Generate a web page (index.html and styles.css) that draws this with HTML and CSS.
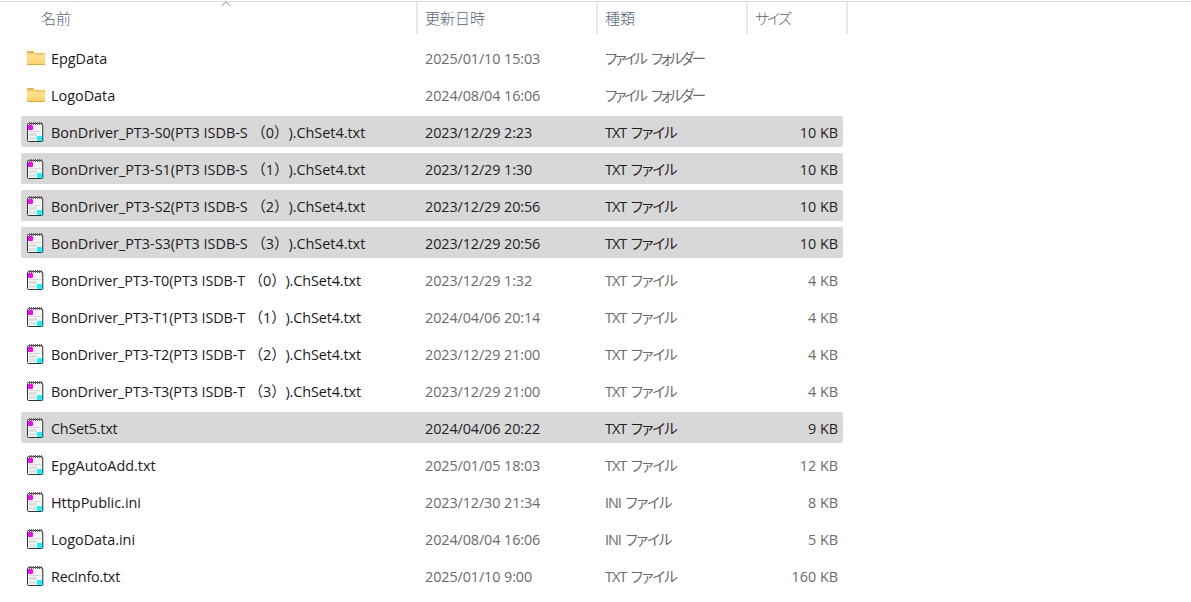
FILE: index.html
```html
<!DOCTYPE html>
<html lang="ja">
<head>
<meta charset="utf-8">
<title>Explorer</title>
<link rel="stylesheet" href="styles.css">
</head>
<body>
<svg class="defs" width="0" height="0" aria-hidden="true">
  <defs>
    <linearGradient id="fg" x1="0" y1="0" x2="0" y2="1"><stop offset="0" stop-color="#ffe596"/><stop offset="1" stop-color="#fcd060"/></linearGradient>
    <symbol id="folder" viewBox="0 0 18 14">
      <path d="M0 .5 A.5 .5 0 0 1 .5 0H6l2 2.500H0z" fill="#eeb02e"/>
      <path d="M0 3h18v11H0z" fill="url(#fg)"/>
      <path d="M8 2h10v1.500H0V3h6z" fill="#f3c14f"/>
      <path d="M0 13h18v1H0z" fill="#e6ab35"/>
    </symbol>
    <symbol id="txt" viewBox="0 0 17 20">
      <rect x=".5" y="1.500" width="15" height="18" rx="1" fill="#f6f6f6" stroke="#333" stroke-width="1"/>
      <path d="M16 3v17" stroke="#8a8a8a"/>
      <path d="M2.500 0v3M4.500 0v3M6.500 0v3M8.500 0v3M10.500 0v3M12.500 0v3M14.500 0v3" stroke="#666"/>
      <rect x="2" y="9" width="12" height="1" fill="#d6d6d6"/>
      <rect x="2" y="11" width="8" height="3" fill="#dedede"/>
      <rect x="2" y="15" width="7" height="3" fill="#e2e2e2"/>
      <rect x="1" y="3" width="5" height="5" rx="1" fill="#ff00ff"/>
      <rect x="10" y="14" width="5" height="5" rx="1" fill="#00ffff"/>
    </symbol>
  </defs>
</svg>
<main class="explorer">
  <div class="header">
    <svg class="sort" width="10" height="6" viewBox="0 0 10 6"><path d="M.5 5 5 .7 9.500 5" fill="none" stroke="#8a8a8a"/></svg>
    <div class="hcell hname">名前</div>
    <div class="hcell hdate">更新日時</div>
    <div class="hcell htype">種類</div>
    <div class="hcell hsize">サイズ</div>
  </div>
  <div class="list">
    <div class="row"><svg class="ic folder"><use href="#folder"/></svg><span class="name">EpgData</span><span class="date">2025/01/10 15:03</span><span class="type dir">ファイル フォルダー</span><span class="size"></span></div>
    <div class="row"><svg class="ic folder"><use href="#folder"/></svg><span class="name">LogoData</span><span class="date">2024/08/04 16:06</span><span class="type dir">ファイル フォルダー</span><span class="size"></span></div>
    <div class="row sel"><svg class="ic"><use href="#txt"/></svg><span class="name">BonDriver_PT3-S0(PT3 ISDB-S （0）).ChSet4.txt</span><span class="date">2023/12/29 2:23</span><span class="type">TXT ファイル</span><span class="size">10 KB</span></div>
    <div class="row sel"><svg class="ic"><use href="#txt"/></svg><span class="name">BonDriver_PT3-S1(PT3 ISDB-S （1）).ChSet4.txt</span><span class="date">2023/12/29 1:30</span><span class="type">TXT ファイル</span><span class="size">10 KB</span></div>
    <div class="row sel"><svg class="ic"><use href="#txt"/></svg><span class="name">BonDriver_PT3-S2(PT3 ISDB-S （2）).ChSet4.txt</span><span class="date">2023/12/29 20:56</span><span class="type">TXT ファイル</span><span class="size">10 KB</span></div>
    <div class="row sel"><svg class="ic"><use href="#txt"/></svg><span class="name">BonDriver_PT3-S3(PT3 ISDB-S （3）).ChSet4.txt</span><span class="date">2023/12/29 20:56</span><span class="type">TXT ファイル</span><span class="size">10 KB</span></div>
    <div class="row"><svg class="ic"><use href="#txt"/></svg><span class="name tight">BonDriver_PT3-T0(PT3 ISDB-T （0）).ChSet4.txt</span><span class="date">2023/12/29 1:32</span><span class="type">TXT ファイル</span><span class="size">4 KB</span></div>
    <div class="row"><svg class="ic"><use href="#txt"/></svg><span class="name tight">BonDriver_PT3-T1(PT3 ISDB-T （1）).ChSet4.txt</span><span class="date">2024/04/06 20:14</span><span class="type">TXT ファイル</span><span class="size">4 KB</span></div>
    <div class="row"><svg class="ic"><use href="#txt"/></svg><span class="name tight">BonDriver_PT3-T2(PT3 ISDB-T （2）).ChSet4.txt</span><span class="date">2023/12/29 21:00</span><span class="type">TXT ファイル</span><span class="size">4 KB</span></div>
    <div class="row"><svg class="ic"><use href="#txt"/></svg><span class="name tight">BonDriver_PT3-T3(PT3 ISDB-T （3）).ChSet4.txt</span><span class="date">2023/12/29 21:00</span><span class="type">TXT ファイル</span><span class="size">4 KB</span></div>
    <div class="row sel"><svg class="ic"><use href="#txt"/></svg><span class="name short">ChSet5.txt</span><span class="date">2024/04/06 20:22</span><span class="type">TXT ファイル</span><span class="size">9 KB</span></div>
    <div class="row"><svg class="ic"><use href="#txt"/></svg><span class="name">EpgAutoAdd.txt</span><span class="date">2025/01/05 18:03</span><span class="type">TXT ファイル</span><span class="size">12 KB</span></div>
    <div class="row"><svg class="ic"><use href="#txt"/></svg><span class="name">HttpPublic.ini</span><span class="date">2023/12/30 21:34</span><span class="type">INI ファイル</span><span class="size">8 KB</span></div>
    <div class="row"><svg class="ic"><use href="#txt"/></svg><span class="name">LogoData.ini</span><span class="date">2024/08/04 16:06</span><span class="type">INI ファイル</span><span class="size">5 KB</span></div>
    <div class="row"><svg class="ic"><use href="#txt"/></svg><span class="name short">RecInfo.txt</span><span class="date">2025/01/10 9:00</span><span class="type">TXT ファイル</span><span class="size">160 KB</span></div>
  </div>
</main>
</body>
</html>
```

FILE: styles.css
```css
* { box-sizing: border-box; }
html, body { margin: 0; height: 100%; background: #fff; overflow: hidden; }
body {
  font-family: "Open Sans", "Noto Sans CJK JP", sans-serif;
  font-size: 14.4px;
  color: #1a1a1a;
  text-spacing-trim: space-all;
}
.defs { display: block; height: 0; }
.explorer { border-top: 1px solid #dedede; margin-top: 1px; }
.header {
  position: relative;
  display: grid;
  grid-template-columns: 418px 180px 150px 100px;
  height: 32px;
  color: #56657a;
  font-size: 15px;
  font-weight: 300;
}
.sort { position: absolute; left: 221px; top: -1px; }
.hcell { padding: 6px 0 0 7px; border-right: 2px solid #e8e8e8; line-height: 20px; }
.hname { padding-left: 41px; }
.hsize { font-feature-settings: "palt"; letter-spacing: -2px; }
.list { padding: 8px 0 0 21px; display: flex; flex-direction: column; gap: 6px; width: 843px; }
.row {
  display: grid;
  grid-template-columns: 24px 374px 180px 150px 83px;
  align-items: center;
  height: 31px;
  border-radius: 2px;
  padding-left: 6px;
  line-height: 20px;
}
.row.sel { background: #d8d8d8; }
.ic { width: 17px; height: 20px; }
.folder { width: 18px; height: 14px; }
.name, .date, .type, .size { padding-top: 2px; }
.name { white-space: pre; }
.name.tight { letter-spacing: -.1px; }
.name.short { letter-spacing: -.25px; }
.date { letter-spacing: -.1px; }
.type { font-feature-settings: "palt"; letter-spacing: -1px; word-spacing: 2px; white-space: pre; }
.type.dir { letter-spacing: -2.3px; word-spacing: 4px; }
.date, .type, .size { color: #6b6b6b; }
.sel .date, .sel .type, .sel .size { color: #1f1f1f; }
.size { text-align: right; }
```
